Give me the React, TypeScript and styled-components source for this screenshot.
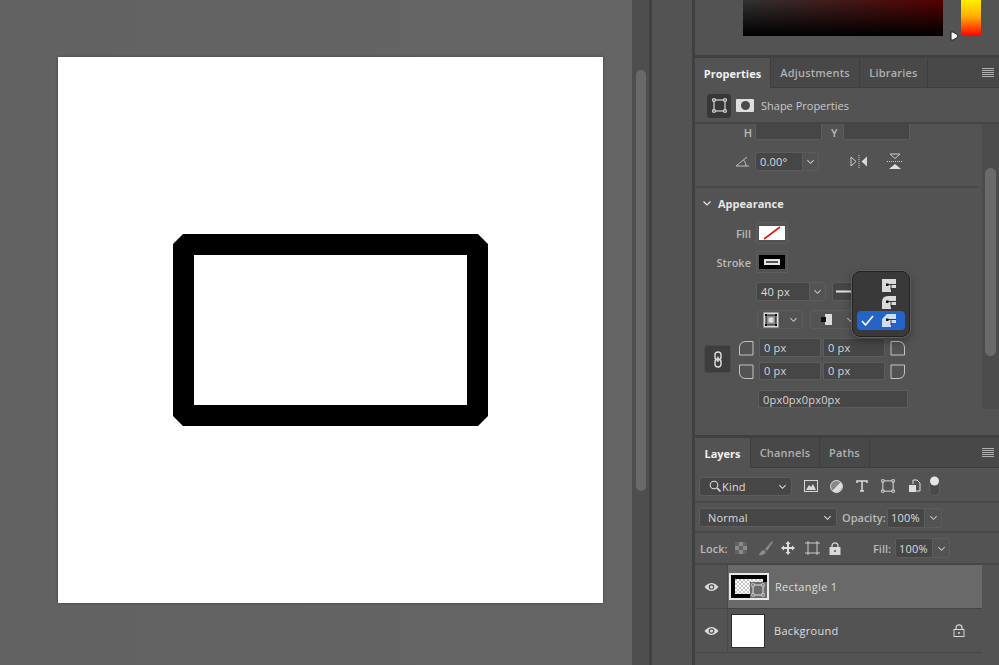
import React from "react";
import styled, { createGlobalStyle } from "styled-components";

const Global = createGlobalStyle`
  html, body { margin: 0; padding: 0; background: #535353; }
  body { font-family: "Open Sans", "Liberation Sans", sans-serif; overflow: hidden; }
  * { box-sizing: border-box; }
`;

const Frame = styled.div`
  width: 999px; height: 665px; display: flex; overflow: hidden; background: #535353;
`;
const Canvas = styled.main`
  width: 632px; height: 665px; background: linear-gradient(90deg, #626262, #656565);
  padding: 57px 0 0 58px; flex: none;
`;
const Artboard = styled.div`
  width: 545px; height: 546px; background: #fff; box-shadow: 0 0 3px rgba(0,0,0,.35);
  padding: 177px 0 0 115px;
`;
const Track = styled.div`
  width: 17px; height: 665px; flex: none; background: #4e4e4e; padding: 70px 0 0 4px;
`;
const Thumb = styled.div`
  width: 10px; height: 421px; border-radius: 5px; background: #696969;
`;
const VLine = styled.div`
  width: 3px; flex: none; background: #404040;
`;
const Dock = styled.div`
  width: 40px; flex: none; background: #535353;
`;
const Side = styled.aside`
  width: 304px; flex: none; display: flex; flex-direction: column; background: #535353; color: #d4d4d4;
`;
const HLine = styled.div`
  height: 3px; flex: none; background: #404040;
`;
const Picker = styled.section`
  height: 55px; flex: none; display: flex; padding-left: 48px;
`;
const ColorField = styled.div`
  width: 200px; height: 36px;
  background: linear-gradient(to top, #000 0%, rgba(0,0,0,0) 100%), linear-gradient(to right, #323232, #560000);
`;
const SliderMark = styled.div`
  width: 18px; height: 41px; padding: 31px 0 0 7px; line-height: 0;
`;
const HueStrip = styled.div`
  width: 20px; height: 36px; background: linear-gradient(to bottom, #ffee00 0%, #ffb000 45%, #ff0000 100%);
`;
const TabBar = styled.div`
  height: 30px; flex: none; display: flex; background: #484848; border-bottom: 1px solid #3e3e3e;
  align-items: stretch; position: relative;
`;
const Tab = styled.div<{ $w: number; $active?: boolean }>`
  width: ${p => p.$w}px; display: flex; align-items: center; justify-content: center;
  font-size: 11px; font-weight: ${p => (p.$active ? 700 : 600)}; letter-spacing: ${p => (p.$active ? 0 : 0.2)}px;
  color: ${p => (p.$active ? "#f0f0f0" : "#b0b0b0")};
  background: ${p => (p.$active ? "#535353" : "transparent")};
  border-right: 1px solid #3e3e3e;
  margin-bottom: ${p => (p.$active ? "-1px" : "0")};
`;
const Spacer = styled.div`
  flex: 1;
`;
const MenuIcon = styled.div`
  width: 17px; display: flex; align-items: center; color: #b0b0b0;
`;
const SubBar = styled.div`
  height: 36px; flex: none; display: flex; align-items: center; padding: 1px 0 0 12px;
  border-bottom: 2px solid #454545; font-size: 11px; color: #c8c8c8; letter-spacing: 0;
`;
const ShapeBtn = styled.div`
  width: 24px; height: 24px; border-radius: 3px; background: #373737; display: flex;
  align-items: center; justify-content: center; margin-right: 5px; color: #e4e4e4;
`;
const MaskIcon = styled.div`
  width: 18px; height: 13px; background: #dedede; border-radius: 1px; display: flex;
  align-items: center; justify-content: center; margin-right: 7px;
  &::after { content: ""; width: 9px; height: 9px; border-radius: 50%; background: #4a4a4a; }
`;
const Body = styled.div`
  height: 311px; flex: none; display: flex; position: relative;
`;
const Content = styled.div`
  width: 287px; flex: none; display: flex; flex-direction: column; overflow: hidden;
`;
const BodyTrack = styled.div`
  width: 17px; height: 285px; background: #4c4c4c; padding: 44px 0 0 3px; margin-right: 0;
`;
const BodyThumb = styled.div`
  width: 11px; height: 188px; border-radius: 6px; background: #6a6a6a;
`;
const Row = styled.div<{ $top?: number; $h: number; $left?: number; $gap?: number }>`
  display: flex; align-items: center; flex: none;
  margin-top: ${p => p.$top ?? 0}px; height: ${p => p.$h}px;
  padding-left: ${p => p.$left ?? 0}px; gap: ${p => p.$gap ?? 0}px;
  font-size: 11px;
`;
const Label = styled.span<{ $w?: number }>`
  ${p => (p.$w ? `width: ${p.$w}px; text-align: right;` : "")}
  font-size: 11px; font-weight: 600; color: #b9b9b9; white-space: nowrap; flex: none;
`;
const Field = styled.div<{ $w: number; $mr?: number }>`
  width: ${p => p.$w}px; height: 100%; background: #464646; border: 1px solid #5c5c5c; flex: none;
  margin-right: ${p => p.$mr ?? 0}px;
  display: flex; align-items: center; padding-left: 4px; font-size: 11px; color: #d6d6d6; letter-spacing: .2px;
`;
const ClipField = styled(Field)<{ $ml: number }>`
  border-top: none; border-radius: 0 0 2px 2px; margin-left: ${p => p.$ml}px;
`;
const Combo = styled.div<{ $w: number; $split?: number; $ml?: number }>`
  width: ${p => p.$w}px; height: 100%; flex: none; display: grid; align-items: center;
  grid-template-columns: ${p => (p.$split ? `1fr ${p.$split}px` : "1fr 18px")};
  border: 1px solid #5c5c5c; border-radius: 3px; margin-left: ${p => p.$ml ?? 0}px;
  font-size: 11px; color: #dcdcdc; letter-spacing: .2px;
`;
const ComboValue = styled.div<{ $center?: boolean; $pad?: number; $clear?: boolean }>`
  background: ${p => (p.$clear ? "transparent" : "#464646")}; height: 100%; display: flex; align-items: center;
  padding-left: ${p => p.$pad ?? 4}px; ${p => (p.$center ? "justify-content:center;" : "")}
  border-radius: 2px 0 0 2px;
`;
const ComboArrow = styled.div<{ $split?: boolean }>`
  height: 100%; display: flex; align-items: center; justify-content: center; color: #c4c4c4;
  ${p => (p.$split ? "border-left: 1px solid #5c5c5c;" : "")}
`;
const Rule = styled.div`
  width: 283px; height: 2px; background: #484848; flex: none; margin-top: 15px;
`;
const SectionHead = styled.div`
  display: flex; align-items: center; height: 16px; margin-top: 7px; padding-left: 7px; gap: 6px;
  font-size: 11px; font-weight: 700; color: #e6e6e6; flex: none;
`;
const Swatch = styled.div`
  width: 32px; height: 100%; border: 1px solid #5e5e5e; padding: 3px 2px; margin-left: 5px; border-radius: 2px;
`;
const SwatchFill = styled.div<{ $black?: boolean }>`
  width: 100%; height: 100%; display: flex; align-items: center; justify-content: center;
  background: ${p => (p.$black ? "#000" : "#fff")};
`;
const StrokeChip = styled.div`
  width: 16px; height: 6px; border: 2px solid #e4e4e4; background: #555;
`;
const CornerBlock = styled.div`
  display: flex; margin-top: 9px; padding-left: 9px; flex: none; height: 42px;
`;
const LinkBtn = styled.div`
  width: 27px; height: 28px; margin-top: 7px; border-radius: 3px; background: #3d3d3d; border: 1px solid #4a4a4a;
  display: flex; align-items: center; justify-content: center; color: #ddd; margin-right: 7px; flex: none;
`;
const CornerRows = styled.div`
  display: flex; flex-direction: column; gap: 5px;
`;
const CornerRow = styled.div`
  display: flex; align-items: center; height: 19px; gap: 2px;
`;
const CornerIconBox = styled.div<{ $side?: boolean }>`
  width: 16px; height: 16px; margin-right: ${p => (p.$side ? 0 : 3)}px; margin-left: ${p => (p.$side ? 3 : 0)}px; flex: none;
`;
const Popup = styled.div`
  position: absolute; left: 157px; top: 147px; width: 58px; height: 66px; border-radius: 8px;
  background: #393939; border: 1px solid #222; box-shadow: 0 0 0 1px #5f5f5f, 0 4px 10px rgba(0,0,0,.35);
  padding: 4px; display: flex; flex-direction: column; justify-content: flex-start;
`;
const PopItem = styled.div<{ $sel?: boolean }>`
  height: ${p => (p.$sel ? 19 : 16)}px; border-radius: 4px; display: flex; align-items: center;
  position: relative; justify-content: flex-end; padding-right: 9px;
  background: ${p => (p.$sel ? "#2563c9" : "transparent")}; flex: none; margin-top: 1px;
`;
const Check = styled.span`
  position: absolute; left: 4px; top: 4px; color: #fff; line-height: 0;
`;
const LayersBar = styled.div<{ $h: number; $line?: boolean; $left?: number; $pt?: number }>`
  height: ${p => p.$h}px; flex: none; display: flex; align-items: center;
  padding: ${p => p.$pt ?? 0}px 0 0 ${p => p.$left ?? 4}px;
  ${p => (p.$line ? "border-bottom: 2px solid #474747;" : "")}
`;
const SelectBox = styled.div<{ $w: number; $pl?: number }>`
  width: ${p => p.$w}px; height: 19px; border: 1px solid #5c5c5c; border-radius: 3px; background: #464646;
  display: flex; align-items: center; font-size: 11px; color: #dcdcdc; flex: none; padding: 0 4px 0 ${p => p.$pl ?? 8}px; letter-spacing: .2px;
`;
const SelectText = styled.span`
  flex: 1; display: flex; align-items: center; gap: 1px;
`;
const IconSlot = styled.span<{ $w: number; $ml: number }>`
  width: ${p => p.$w}px; margin-left: ${p => p.$ml}px; display: flex; justify-content: center; flex: none; color: #d8d8d8;
`;
const InlineLabel = styled(Label)<{ $ml?: number; $fw: number }>`
  margin-left: ${p => p.$ml ?? 0}px; width: ${p => p.$fw}px;
`;
const Pct = styled.div<{ $ml?: number }>`
  height: 20px; width: 55px; flex: none; margin-left: ${p => p.$ml ?? 0}px;
`;
const LayerRow = styled.div<{ $h: number }>`
  height: ${p => p.$h}px; flex: none; display: flex; width: 287px; border-bottom: 1px solid #454545;
`;
const EyeCell = styled.div`
  width: 33px; flex: none; display: flex; align-items: center; justify-content: center;
  border-right: 1px solid #484848; color: #dcdcdc;
`;
const LayerMain = styled.div<{ $sel?: boolean }>`
  flex: 1; display: flex; align-items: center; padding-left: 1px;
  background: ${p => (p.$sel ? "#696969" : "transparent")}; position: relative;
`;
const LayerName = styled.span`
  font-size: 11px; color: #dedede; letter-spacing: .3px; margin-left: 6px; flex: 1;
`;
const LayerThumb = styled.svg`
  flex: none; display: block;
`;
const BgThumb = styled.div`
  width: 34px; height: 34px; background: #fff; border: 1px solid #2e2e2e; margin: 0 3px 0 2px; flex: none;
`;
const LockSlot = styled.span`
  color: #d8d8d8; margin-right: 17px; display: flex;
`;
const Glyph = styled.svg<{ $ml: number }>`
  margin-left: ${p => p.$ml}px; flex: none;
`;

const Chev = ({ size = 9 }: { size?: number }) => (
  <svg width={size} height={size} viewBox="0 0 10 10" fill="none" stroke="currentColor" strokeWidth="1.2">
    <path d="M1.5 3.5 5 7l3.5-3.5" />
  </svg>
);
const Lines = () => (
  <svg width="12" height="10" viewBox="0 0 12 10" fill="currentColor">
    <rect y="0" width="12" height="1" /><rect y="2" width="12" height="1" /><rect y="4" width="12" height="1" />
    <rect y="6" width="12" height="1" /><rect y="8" width="12" height="1" />
  </svg>
);
const ShapeIcon = ({ s = 15 }: { s?: number }) => (
  <svg width={s} height={s} viewBox="0 0 15 15" fill="none" stroke="currentColor" strokeWidth="1.1">
    <rect x="2" y="2" width="11" height="11" />
    {[[2, 2], [13, 2], [2, 13], [13, 13]].map(([x, y]) => (
      <rect key={`${x}${y}`} x={x - 1.3} y={y - 1.3} width="2.6" height="2.6" rx=".6" fill="#444" />
    ))}
  </svg>
);
const Join = ({ kind, c = "#dadada" }: { kind: 0 | 1 | 2; c?: string }) => {
  const d = kind === 0 ? "M0 0H14V9H9V13H0Z" : kind === 1 ? "M6 0H14V9H9V13H0V6Q0 0 6 0Z" : "M5 0H14V9H9V13H0V5Z";
  return (
    <svg width="14" height="13" viewBox="0 0 14 13">
      <path d={d} fill={c} />
      <rect x="4" y="4.500" width="2.500" height="2.500" fill="#111" />
      <path d="M5 5.500H14M9 5.500V11" stroke="#111" strokeWidth=".8" fill="none" />
    </svg>
  );
};
const Corner = ({ r }: { r: "tl" | "tr" | "bl" | "br" }) => {
  const d = {
    tl: "M15 1.5H8Q1.5 1.5 1.5 8V15H15Z",
    tr: "M1 1.5H8Q14.5 1.5 14.5 8V15H1Z",
    bl: "M1.5 1H15V14.5H8Q1.5 14.5 1.5 8Z",
    br: "M1 1H14.5V8Q14.5 14.5 8 14.5H1Z",
  }[r];
  return <svg width="16" height="16" viewBox="0 0 16 16" fill="none" stroke="#c4c4c4" strokeWidth="1"><path d={d} /></svg>;
};
const Eye = () => (
  <svg width="15" height="10" viewBox="0 0 15 10">
    <path d="M.5 5Q7.5-3 14.5 5 7.5 13 .5 5Z" fill="currentColor" />
    <circle cx="7.5" cy="5" r="2.8" fill="#535353" /><circle cx="7.5" cy="5" r="1.6" fill="currentColor" />
  </svg>
);
const LockIco = ({ hollow }: { hollow?: boolean }) => (
  <svg width="12" height="13" viewBox="0 0 12 13" fill="none" stroke="currentColor">
    <path d="M3 6V3.8a3 3 0 0 1 6 0V6" strokeWidth="1.2" />
    <rect x="1" y="5.5" width="10" height="7" fill={hollow ? "none" : "currentColor"} />
    <circle cx="6" cy="9" r="1" fill={hollow ? "currentColor" : "#535353"} stroke="none" />
  </svg>
);

export default function App() {
  return (
    <Frame>
      <Global />
      <Canvas>
        <Artboard>
          <svg width="315" height="192" viewBox="0 0 315 192">
            <path fillRule="evenodd" d="M10 0H305L315 10V182L305 192H10L0 182V10ZM21 21V171H294V21Z" fill="#000" />
          </svg>
        </Artboard>
      </Canvas>
      <Track><Thumb /></Track>
      <VLine />
      <Dock />
      <VLine />
      <Side>
        <Picker>
          <ColorField />
          <SliderMark>
            <svg width="9" height="10" viewBox="0 0 9 10"><path d="M1 1H3Q8 3.500 8 5T3 9H1Z" fill="#f4f4f4" stroke="#222" strokeWidth="1" /></svg>
          </SliderMark>
          <HueStrip />
        </Picker>
        <HLine />
        <TabBar>
          <Tab $w={76} $active>Properties</Tab>
          <Tab $w={89}>Adjustments</Tab>
          <Tab $w={68}>Libraries</Tab>
          <Spacer />
          <MenuIcon><Lines /></MenuIcon>
        </TabBar>
        <SubBar>
          <ShapeBtn><ShapeIcon /></ShapeBtn>
          <MaskIcon />
          Shape Properties
        </SubBar>
        <Body>
          <Content>
            <Row $h={16}>
              <Label $w={57}>H</Label>
              <ClipField $w={67} $mr={9} $ml={3} />
              <Label>Y</Label>
              <ClipField $w={67} $ml={5} />
            </Row>
            <Row $top={12} $h={19} $left={40}>
              <svg width="15" height="11" viewBox="0 0 15 11" fill="none" stroke="#bcbcbd" strokeWidth="1"><path d="M14 10H1L12 1M8.5 4Q11 6.500 11 10" /></svg>
              <Combo $w={64} $split={16} $ml={5}>
                <ComboValue>0.00°</ComboValue>
                <ComboArrow $split><Chev /></ComboArrow>
              </Combo>
              <Glyph $ml={31} width="18" height="13" viewBox="0 0 18 13"><path d="M1 2 6 6.500 1 11Z" fill="none" stroke="#ccc" /><path d="M17 1.500V11.500L11.500 6.500Z" fill="#d8d8d8" /><path d="M9 0V13" stroke="#ccc" strokeDasharray="1 1" /></Glyph>
              <Glyph $ml={19} width="16" height="17" viewBox="0 0 16 17"><path d="M3 1H13L8 5.500Z" fill="none" stroke="#ccc" /><path d="M2 16H14L8 11Z" fill="#e0e0e0" /><path d="M0 8.500H16" stroke="#ccc" strokeDasharray="1 1" /></Glyph>
            </Row>
            <Rule />
            <SectionHead><Chev size={10} />Appearance</SectionHead>
            <Row $top={11} $h={22}>
              <Label $w={56}>Fill</Label>
              <Swatch>
                <SwatchFill>
                  <svg width="24" height="14" viewBox="0 0 24 14"><path d="M4 13 20 1" stroke="#e01818" strokeWidth="1.6" /></svg>
                </SwatchFill>
              </Swatch>
            </Row>
            <Row $top={7} $h={22}>
              <Label $w={56}>Stroke</Label>
              <Swatch><SwatchFill $black><StrokeChip /></SwatchFill></Swatch>
            </Row>
            <Row $top={9} $h={19} $left={61}>
              <Combo $w={70} $split={16}>
                <ComboValue>40 px</ComboValue>
                <ComboArrow $split><Chev /></ComboArrow>
              </Combo>
              <Combo $w={42} $ml={6}>
                <ComboValue $pad={3}><svg width="16" height="3"><rect width="16" height="2" y="0.5" fill="#e4e4e4" /></svg></ComboValue>
                <ComboArrow />
              </Combo>
            </Row>
            <Row $top={9} $h={19} $left={62}>
              <Combo $w={46} $split={18}>
                <ComboValue $center $clear $pad={0}>
                  <svg width="16" height="16" viewBox="0 0 16 16"><rect x=".5" y=".5" width="15" height="15" fill="#dcdcdc" /><rect x="3" y="3" width="10" height="10" rx="1" fill="#8a8a8a" stroke="#111" /><rect x="5.500" y="5.500" width="5" height="5" fill="#ddd" /><rect x="2" y="2" width="2" height="2" fill="#000" /><rect x="12" y="2" width="2" height="2" fill="#000" /><rect x="2" y="12" width="2" height="2" fill="#000" /><rect x="12" y="12" width="2" height="2" fill="#000" /></svg>
                </ComboValue>
                <ComboArrow><Chev /></ComboArrow>
              </Combo>
              <Combo $w={50} $split={18} $ml={7}>
                <ComboValue $center $clear $pad={0}>
                  <svg width="11" height="11" viewBox="0 0 11 11"><path d="M4 0H11V11H4V8H0V3H4Z" fill="#dcdcdc" /><rect x="0" y="3" width="5" height="5" fill="#111" /></svg>
                </ComboValue>
                <ComboArrow><Chev /></ComboArrow>
              </Combo>
            </Row>
            <CornerBlock>
              <LinkBtn>
                <svg width="10" height="17" viewBox="0 0 10 17" fill="none" stroke="currentColor" strokeWidth="1.4"><rect x="2" y="1" width="6" height="8" rx="3" /><rect x="2" y="8" width="6" height="8" rx="3" /><path d="M5 5.500V11" /></svg>
              </LinkBtn>
              <CornerRows>
                <CornerRow>
                  <CornerIconBox><Corner r="tl" /></CornerIconBox>
                  <Field $w={62}>0 px</Field><Field $w={62}>0 px</Field>
                  <CornerIconBox $side><Corner r="tr" /></CornerIconBox>
                </CornerRow>
                <CornerRow>
                  <CornerIconBox><Corner r="bl" /></CornerIconBox>
                  <Field $w={62}>0 px</Field><Field $w={62}>0 px</Field>
                  <CornerIconBox $side><Corner r="br" /></CornerIconBox>
                </CornerRow>
              </CornerRows>
            </CornerBlock>
            <Row $top={10} $h={18} $left={63}>
              <Field $w={150}>0px0px0px0px</Field>
            </Row>
          </Content>
          <BodyTrack><BodyThumb /></BodyTrack>
          <Popup>
            <PopItem><Join kind={0} /></PopItem>
            <PopItem><Join kind={1} /></PopItem>
            <PopItem $sel>
              <Check><svg width="13" height="11" viewBox="0 0 13 11" fill="none" stroke="#fff" strokeWidth="1.6"><path d="M1 6 4.500 10 12 1" /></svg></Check>
              <Join kind={2} c="#cfdffa" />
            </PopItem>
          </Popup>
        </Body>
        <HLine />
        <TabBar>
          <Tab $w={56} $active>Layers</Tab>
          <Tab $w={69}>Channels</Tab>
          <Tab $w={50}>Paths</Tab>
          <Spacer />
          <MenuIcon><Lines /></MenuIcon>
        </TabBar>
        <LayersBar $h={35} $line $pt={3}>
          <SelectBox $w={93} $pl={9}>
            <SelectText>
              <svg width="12" height="12" viewBox="0 0 12 12" fill="none" stroke="#ddd" strokeWidth="1.1"><circle cx="5" cy="5" r="3.800" /><path d="M8 8 11.500 11.500" strokeWidth="1.6" /></svg>
              Kind
            </SelectText>
            <Chev />
          </SelectBox>
          <IconSlot $w={20} $ml={9}>
            <svg width="14" height="12" viewBox="0 0 14 12"><rect x=".5" y=".5" width="13" height="11" fill="none" stroke="#d8d8d8" /><path d="M2 10 5 5 7 7 9 4 12 10Z" fill="#d8d8d8" /></svg>
          </IconSlot>
          <IconSlot $w={20} $ml={5}>
            <svg width="13" height="13" viewBox="0 0 13 13"><circle cx="6.500" cy="6.500" r="6" fill="#888" stroke="#ddd" /><path d="M10.700 2.300A6 6 0 0 1 2.300 10.700Z" fill="#ddd" /></svg>
          </IconSlot>
          <IconSlot $w={20} $ml={6}>
            <svg width="12" height="12" viewBox="0 0 12 12"><path d="M1 3V1H11V3M6 1V11M4 11H8" stroke="#ddd" strokeWidth="1.5" fill="none" /></svg>
          </IconSlot>
          <IconSlot $w={20} $ml={6}><ShapeIcon s={14} /></IconSlot>
          <IconSlot $w={20} $ml={6}>
            <svg width="13" height="14" viewBox="0 0 13 14"><path d="M5 5V1H9L12 4V12H7" fill="none" stroke="#ddd" /><rect x="1" y="6" width="7" height="7" fill="#ddd" /></svg>
          </IconSlot>
          <IconSlot $w={12} $ml={4}>
            <svg width="11" height="20" viewBox="0 0 11 20"><rect x=".5" y="4" width="10" height="15.500" rx="5" fill="#4a4a4a" stroke="#5f5f5f" /><circle cx="5.500" cy="5" r="4.500" fill="#e6e6e6" /></svg>
          </IconSlot>
        </LayersBar>
        <LayersBar $h={30} $line $pt={1}>
          <SelectBox $w={138}>
            <SelectText>Normal</SelectText>
            <Chev />
          </SelectBox>
          <InlineLabel $ml={5} $fw={45}>Opacity:</InlineLabel>
          <Pct><Combo $w={55} $split={17}><ComboValue $pad={3}>100%</ComboValue><ComboArrow $split><Chev /></ComboArrow></Combo></Pct>
        </LayersBar>
        <LayersBar $h={32} $line $left={5}>
          <InlineLabel $fw={30}>Lock:</InlineLabel>
          <IconSlot $w={14} $ml={4}>
            <svg width="12" height="12" viewBox="0 0 12 12"><rect width="12" height="12" fill="#8a8a8a" /><path d="M0 0H4V4H0ZM8 0H12V4H8ZM4 4H8V8H4ZM0 8H4V12H0ZM8 8H12V12H8Z" fill="#626262" /></svg>
          </IconSlot>
          <IconSlot $w={16} $ml={9}>
            <svg width="15" height="15" viewBox="0 0 15 15"><path d="M14 0 7 8 9 10 15 1ZM1 14Q6 15 8 11L6 9Q3 9 1 14Z" fill="#8a8a8a" /></svg>
          </IconSlot>
          <IconSlot $w={16} $ml={7}>
            <svg width="14" height="14" viewBox="0 0 14 14" fill="#ddd"><path d="M7 0 9.500 3H8V6H11V4.500L14 7 11 9.500V8H8V11H9.500L7 14 4.500 11H6V8H3V9.500L0 7 3 4.500V6H6V3H4.500Z" /></svg>
          </IconSlot>
          <IconSlot $w={16} $ml={8}>
            <svg width="15" height="14" viewBox="0 0 15 14" fill="none" stroke="#ccc"><path d="M3 2H12V12H3ZM0 2H3M12 2H15M0 12H3M12 12H15M3 0V2M12 0V2M3 12V14M12 12V14" /></svg>
          </IconSlot>
          <IconSlot $w={14} $ml={8}><LockIco /></IconSlot>
          <InlineLabel $ml={31} $fw={21}>Fill:</InlineLabel>
          <Pct $ml={1}><Combo $w={55} $split={17}><ComboValue $pad={3}>100%</ComboValue><ComboArrow $split><Chev /></ComboArrow></Combo></Pct>
        </LayersBar>
        <LayerRow $h={44}>
          <EyeCell><Eye /></EyeCell>
          <LayerMain $sel>
            <LayerThumb width="40" height="27" viewBox="0 0 40 27">
              <defs>
                <pattern id="chk" width="4" height="4" patternUnits="userSpaceOnUse"><rect width="4" height="4" fill="#fff" /><rect width="2" height="2" fill="#c4c4c4" /><rect x="2" y="2" width="2" height="2" fill="#c4c4c4" /></pattern>
              </defs>
              <rect width="40" height="27" fill="#e8e8e8" />
              <rect x="2" y="2" width="36" height="23" fill="#000" />
              <rect x="6" y="6" width="28" height="15" fill="url(#chk)" />
              <rect x="21" y="9" width="17" height="16" fill="#6b6b6b" />
              <rect x="24" y="12" width="10" height="10" fill="none" stroke="#e4e4e4" strokeWidth="1" />
              {[[24, 12], [34, 12], [24, 22], [34, 22]].map(([x, y]) => (
                <rect key={`${x}-${y}`} x={x - 1.2} y={y - 1.2} width="2.4" height="2.4" fill="#6b6b6b" stroke="#e4e4e4" strokeWidth=".7" />
              ))}
            </LayerThumb>
            <LayerName>Rectangle 1</LayerName>
          </LayerMain>
        </LayerRow>
        <LayerRow $h={44}>
          <EyeCell><Eye /></EyeCell>
          <LayerMain>
            <BgThumb />
            <LayerName>Background</LayerName>
            <LockSlot><LockIco hollow /></LockSlot>
          </LayerMain>
        </LayerRow>
      </Side>
    </Frame>
  );
}
